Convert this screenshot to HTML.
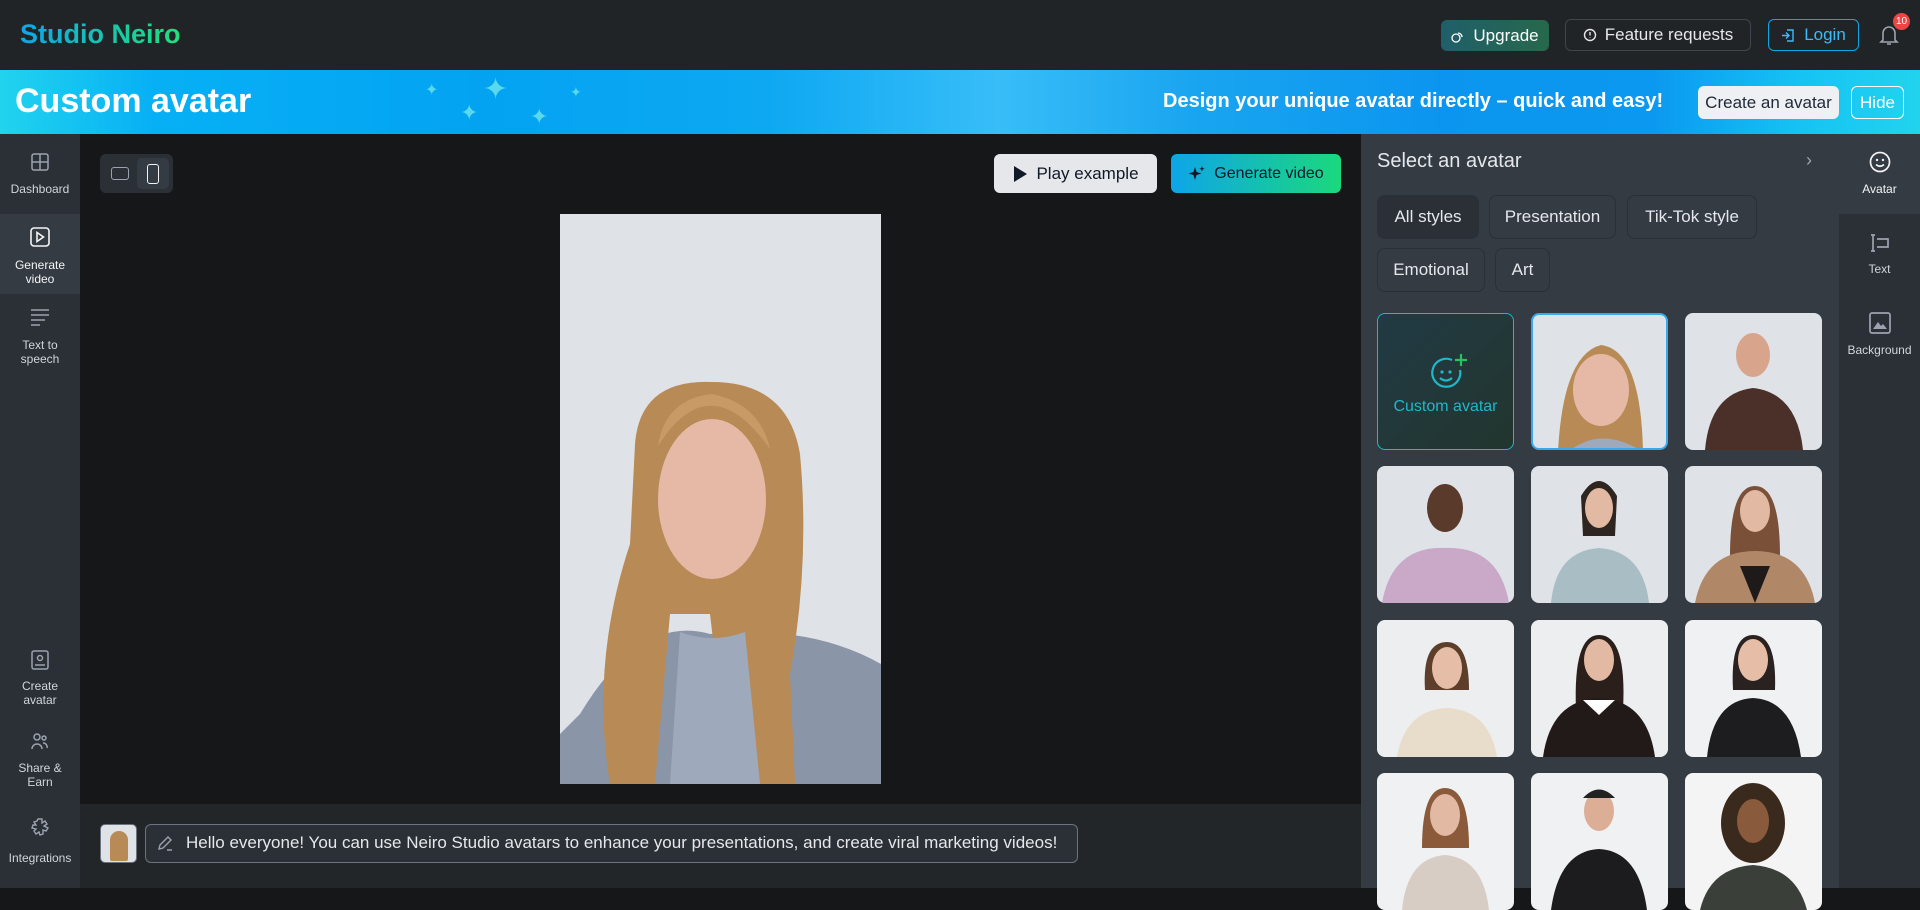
<!DOCTYPE html>
<html><head><meta charset="utf-8"><style>
*{box-sizing:border-box;margin:0;padding:0}
body{width:1920px;height:888px;overflow:hidden;background:#161718;font-family:"Liberation Sans",sans-serif;position:relative;color:#e5e7eb}
.abs{position:absolute}
.hdr{left:0;top:0;width:1920px;height:70px;background:#212427}
.logo{left:20px;top:19px;font-size:27px;font-weight:bold;background:linear-gradient(90deg,#0ea5e9,#22e07a);-webkit-background-clip:text;color:transparent}
.btn{position:absolute;border-radius:6px;font-size:17px;display:flex;align-items:center;justify-content:center;gap:8px}
.banner{left:0;top:70px;width:1920px;height:64px;background:linear-gradient(90deg,#22d3ee 0%,#07b0f5 8%,#03a3f2 25%,#0ea8f2 40%,#38bdf8 52%,#1aa5f0 62%,#0b95f0 75%,#0b98f0 86%,#16c4f4 94%,#22d3ee 100%)}
.side{left:0;top:134px;width:80px;height:754px;background:#2b3036}
.si{position:absolute;left:0;width:80px;text-align:center;font-size:12px;color:#d1d5db;line-height:14px}
.main{left:80px;top:134px;width:1281px;height:670px;background:#161718}
.bot{left:80px;top:804px;width:1281px;height:84px;background:#232629}
.panel{left:1361px;top:134px;width:478px;height:754px;background:#343b43}
.tabs{left:1839px;top:134px;width:81px;height:754px;background:#2b3036}
.chip{position:absolute;height:44px;border:1px solid #2b3036;border-radius:8px;font-size:17px;color:#e5e7eb;display:flex;align-items:center;justify-content:center}
.card{position:absolute;width:137px;height:137px;border-radius:8px;overflow:hidden;background:#dfe2e7}
</style></head><body>
<div class="abs hdr"></div>
<div class="abs logo">Studio Neiro</div>
<div class="btn" style="left:1441px;top:20px;width:108px;height:31px;background:linear-gradient(90deg,#1f5f6a,#27684c);color:#fff"><svg width="14" height="14" viewBox="0 0 14 14"><circle cx="5" cy="9" r="4" fill="none" stroke="#fff" stroke-width="1.3"/><path d="M7 4a4 4 0 0 1 4 4" fill="none" stroke="#fff" stroke-width="1.3"/></svg>Upgrade</div>
<div class="btn" style="left:1565px;top:19px;width:186px;height:32px;border:1px solid #3f454c;color:#e5e7eb"><svg width="14" height="14" viewBox="0 0 14 14"><circle cx="7" cy="7" r="5.5" fill="none" stroke="#e5e7eb" stroke-width="1.4"/><path d="M7 4v3.5M7 9.5v.5" stroke="#e5e7eb" stroke-width="1.4"/></svg>Feature requests</div>
<div class="btn" style="left:1768px;top:19px;width:91px;height:32px;border:1px solid #0ea5e9;color:#38bdf8"><svg width="15" height="15" viewBox="0 0 15 15"><path d="M6 2h6v11H6M1 7.5h7M5 4.5l3 3-3 3" fill="none" stroke="#38bdf8" stroke-width="1.4"/></svg>Login</div>
<svg class="abs" style="left:1878px;top:23px" width="22" height="24" viewBox="0 0 22 24"><path d="M5 17V10a6 6 0 0 1 12 0v7l2 2H3zM9 21h4" fill="none" stroke="#9ca3af" stroke-width="1.6"/></svg>
<div class="abs" style="left:1893px;top:13px;width:17px;height:17px;border-radius:50%;background:#ef4444;color:#fff;font-size:10px;text-align:center;line-height:17px">10</div>

<div class="abs banner"></div>
<div class="abs" style="left:15px;top:82px;font-size:34px;font-weight:bold;color:#fff">Custom avatar</div>
<div class="abs" style="left:420px;top:70px;color:#7ef0ea;font-size:22px;opacity:.7"><span style="position:absolute;left:5px;top:10px;font-size:16px">✦</span><span style="position:absolute;left:63px;top:2px;font-size:30px">✦</span><span style="position:absolute;left:40px;top:30px">✦</span><span style="position:absolute;left:110px;top:34px">✦</span><span style="position:absolute;left:150px;top:14px;font-size:14px">✦</span></div>
<div class="abs" style="left:1163px;top:90px;font-size:20px;font-weight:bold;color:#fff">Design your unique avatar directly – quick and easy!</div>
<div class="btn" style="left:1698px;top:86px;width:141px;height:33px;background:#eef0f3;color:#1f2937">Create an avatar</div>
<div class="btn" style="left:1851px;top:86px;width:53px;height:33px;border:1px solid #fff;color:#fff">Hide</div>

<div class="abs side"></div>
<div class="si" style="top:134px;height:80px;padding-top:18px"><svg width="20" height="20" viewBox="0 0 20 20"><rect x="2" y="2" width="16" height="16" rx="2" fill="none" stroke="#9ca3af" stroke-width="1.5"/><path d="M10 2v16M2 10h16" stroke="#9ca3af" stroke-width="1.5"/></svg><div style="margin-top:7px">Dashboard</div></div>
<div class="si" style="top:214px;height:80px;background:#353b42;padding-top:12px;color:#f3f4f6"><svg width="22" height="22" viewBox="0 0 22 22"><rect x="2" y="2" width="18" height="18" rx="3" fill="none" stroke="#f3f4f6" stroke-width="1.6"/><path d="M8 6.5v9l6.5-4.5z" fill="none" stroke="#f3f4f6" stroke-width="1.6"/></svg><div style="margin-top:7px">Generate<br>video</div></div>
<div class="si" style="top:300px;height:70px;padding-top:6px"><svg width="22" height="22" viewBox="0 0 22 22"><path d="M2 4h18M2 9h18M2 14h14M2 19h9" stroke="#9ca3af" stroke-width="1.6"/></svg><div style="margin-top:7px">Text to<br>speech</div></div>
<div class="si" style="top:649px"><svg width="22" height="22" viewBox="0 0 22 22"><rect x="3" y="2" width="16" height="18" rx="2" fill="none" stroke="#9ca3af" stroke-width="1.5"/><circle cx="11" cy="9" r="2.5" fill="none" stroke="#9ca3af" stroke-width="1.5"/><path d="M6 16h10" stroke="#9ca3af" stroke-width="1.5"/></svg><div style="margin-top:5px">Create<br>avatar</div></div>
<div class="si" style="top:731px"><svg width="22" height="22" viewBox="0 0 22 22"><circle cx="8" cy="6" r="3" fill="none" stroke="#9ca3af" stroke-width="1.5"/><circle cx="15" cy="7" r="2" fill="none" stroke="#9ca3af" stroke-width="1.5"/><path d="M3 18a5 5 0 0 1 10 0M14 12a4 4 0 0 1 4 5" fill="none" stroke="#9ca3af" stroke-width="1.5"/></svg><div style="margin-top:5px">Share &amp;<br>Earn</div></div>
<div class="si" style="top:817px"><svg width="24" height="24" viewBox="0 0 24 24"><path d="M10 2h4v4l3-2 2 3-3 2 4 2-2 3-3-1v4l-3 1-1-3-3 2-2-3 2-2-4-1 1-3h3L6 5l3-1z" fill="none" stroke="#9ca3af" stroke-width="1.4"/></svg><div style="margin-top:7px">Integrations</div></div>

<div class="abs main"></div>
<div class="abs" style="left:100px;top:154px;width:73px;height:39px;background:#2b3036;border-radius:6px"></div>
<div class="abs" style="left:137px;top:158px;width:32px;height:31px;background:#353b42;border-radius:5px"></div>
<div class="abs" style="left:111px;top:167px;width:18px;height:13px;border:1.5px solid #9ca3af;border-radius:3px"></div>
<div class="abs" style="left:147px;top:164px;width:12px;height:20px;border:1.5px solid #f3f4f6;border-radius:3px"></div>
<div class="btn" style="left:994px;top:154px;width:163px;height:39px;background:#e5e7eb;color:#111827"><svg width="16" height="18" viewBox="0 0 16 18"><path d="M2 1l13 8-13 8z" fill="#111827"/></svg>Play example</div>
<div class="btn" style="left:1171px;top:154px;width:170px;height:39px;background:linear-gradient(90deg,#0ea5e9,#1bd87c);color:#0f172a;font-size:16px"><svg width="18" height="18" viewBox="0 0 18 18"><path d="M7 2l1.5 5 5 1.5-5 1.5L7 15l-1.5-5-5-1.5 5-1.5zM14 1l.7 2 2 .7-2 .7L14 6.5l-.7-2-2-.7 2-.7z" fill="#0f172a"/></svg>Generate video</div>

<svg class="abs" style="left:560px;top:214px" width="321" height="570" viewBox="0 0 321 570">
<rect width="321" height="570" fill="#dfe2e7"/>
<path d="M20 500 Q80 400 150 420 Q250 410 321 450 V570 H0 V520z" fill="#8a96a8"/>
<path d="M75 230 Q80 165 152 168 Q228 168 240 240 Q250 350 230 460 L235 570 H170 L150 400 L110 400 L95 570 H50 Q30 450 70 330z" fill="#b88a55"/>
<ellipse cx="152" cy="285" rx="54" ry="80" fill="#e6b9a6"/>
<path d="M98 232 Q150 150 210 235 Q200 190 152 180 Q105 185 98 232z" fill="#c89a66"/>
<path d="M120 418 Q152 430 185 418 L200 570 H110z" fill="#9eaabb"/>
</svg>

<div class="abs bot"></div>
<div class="abs" style="left:100px;top:824px;width:37px;height:39px;border-radius:5px;background:#dfe2e7;border:1px solid #6b7280;overflow:hidden"><div style="margin:6px auto 0;width:18px;height:30px;background:#b88a55;border-radius:9px 9px 2px 2px"></div></div>
<div class="abs" style="left:145px;top:824px;width:933px;height:39px;border:1.5px solid #6b7280;border-radius:6px;background:#2b3036;font-size:17px;color:#e5e7eb;line-height:36px;padding-left:40px">Hello everyone! You can use Neiro Studio avatars to enhance your presentations, and create viral marketing videos!</div>
<svg class="abs" style="left:156px;top:834px" width="18" height="18" viewBox="0 0 18 18"><path d="M3 15l1-4 8-8 3 3-8 8zM11 16h5" fill="none" stroke="#9ca3af" stroke-width="1.4"/></svg>

<div class="abs panel"></div>
<div class="abs" style="left:1377px;top:150px;font-size:20px;color:#e5e7eb">Select an avatar</div>
<div class="abs" style="left:1806px;top:150px;font-size:18px;color:#9ca3af">›</div>
<div class="chip" style="left:1377px;top:195px;width:102px;background:#2b3036">All styles</div>
<div class="chip" style="left:1489px;top:195px;width:127px">Presentation</div>
<div class="chip" style="left:1627px;top:195px;width:130px">Tik-Tok style</div>
<div class="chip" style="left:1377px;top:248px;width:108px">Emotional</div>
<div class="chip" style="left:1495px;top:248px;width:55px">Art</div>

<div class="card" style="left:1377px;top:313px;background:linear-gradient(135deg,#213a44,#22362e);border:1.5px solid #1fb8c8"><svg style="position:absolute;left:50px;top:38px" width="40" height="40" viewBox="0 0 40 40"><path d="M24 8A14 14 0 1 0 32 18" fill="none" stroke="#1fb7c9" stroke-width="2.2"/><circle cx="14" cy="20" r="1.6" fill="#1fb7c9"/><circle cx="22" cy="20" r="1.6" fill="#1fb7c9"/><path d="M12 26q6 5 12 0" fill="none" stroke="#1fb7c9" stroke-width="2.2"/><path d="M33 2v12M27 8h12" stroke="#22c55e" stroke-width="2.2"/></svg><div style="position:absolute;top:84px;width:100%;text-align:center;font-size:16px;color:#1fb7c9">Custom avatar</div></div>

<div class="card" style="left:1531px;top:313px;border:2px solid #38a8ee"><svg width="137" height="137"><path d="M25 137 Q30 40 68 30 Q108 35 110 137z" fill="#b88a55"/><ellipse cx="68" cy="75" rx="28" ry="36" fill="#e6b9a6"/><path d="M35 137 Q68 110 110 137z" fill="#9eaabb"/></svg></div>
<div class="card" style="left:1685px;top:313px"><svg width="137" height="137"><ellipse cx="68" cy="42" rx="17" ry="22" fill="#d8a58c"/><path d="M20 137 Q25 80 68 75 Q112 80 118 137z" fill="#4a3028"/></svg></div>
<div class="card" style="left:1377px;top:466px"><svg width="137" height="137"><ellipse cx="68" cy="42" rx="18" ry="24" fill="#5a3a2a"/><path d="M5 137 Q15 80 68 82 Q122 80 132 137z" fill="#c9a8c8"/></svg></div>
<div class="card" style="left:1531px;top:466px"><svg width="137" height="137"><path d="M50 30 Q68 0 86 30 L84 70 L52 70z" fill="#2e2520"/><ellipse cx="68" cy="42" rx="14" ry="20" fill="#e2b9a3"/><path d="M20 137 Q25 85 68 82 Q112 85 118 137z" fill="#a9bdc4"/></svg></div>
<div class="card" style="left:1685px;top:466px"><svg width="137" height="137"><path d="M45 90 Q45 20 70 20 Q95 20 95 90z" fill="#7a5038"/><ellipse cx="70" cy="45" rx="15" ry="21" fill="#e2b9a3"/><path d="M10 137 Q20 85 70 85 Q120 85 130 137z" fill="#b08868"/><path d="M55 100 L70 137 L85 100z" fill="#1f1a1a"/></svg></div>
<div class="card" style="left:1377px;top:620px;background:#eceef0"><svg width="137" height="137"><path d="M48 70 Q45 22 70 22 Q92 22 92 70z" fill="#5c3e2a"/><ellipse cx="70" cy="48" rx="15" ry="21" fill="#e6bea8"/><path d="M20 137 Q28 90 70 88 Q112 90 120 137z" fill="#e8dccb"/></svg></div>
<div class="card" style="left:1531px;top:620px;background:#eceef0"><svg width="137" height="137"><path d="M45 90 Q42 15 68 15 Q96 15 92 90z" fill="#2a1f1a"/><ellipse cx="68" cy="40" rx="15" ry="21" fill="#e2b9a3"/><path d="M12 137 Q20 80 68 78 Q116 80 124 137z" fill="#211a18"/><path d="M52 80 L68 95 L84 80z" fill="#fff"/></svg></div>
<div class="card" style="left:1685px;top:620px;background:#f0f1f3"><svg width="137" height="137"><path d="M48 70 Q45 15 68 15 Q92 15 90 70z" fill="#2a2220"/><ellipse cx="68" cy="40" rx="15" ry="21" fill="#e6bea8"/><path d="M22 137 Q28 80 68 78 Q108 80 116 137z" fill="#1d1d1f"/></svg></div>
<div class="card" style="left:1377px;top:773px;background:#f0f1f3"><svg width="137" height="137"><path d="M45 75 Q45 15 68 15 Q92 15 92 75z" fill="#8a5a3a"/><ellipse cx="68" cy="42" rx="15" ry="21" fill="#e2b9a3"/><path d="M25 137 Q30 85 68 82 Q106 85 112 137z" fill="#d7cdc5"/></svg></div>
<div class="card" style="left:1531px;top:773px;background:#f0f1f3"><svg width="137" height="137"><ellipse cx="68" cy="38" rx="15" ry="20" fill="#dcae96"/><path d="M52 25 Q68 8 84 25z" fill="#222"/><path d="M20 137 Q28 78 68 76 Q108 78 116 137z" fill="#1c1c1e"/></svg></div>
<div class="card" style="left:1685px;top:773px;background:#f4f4f5"><svg width="137" height="137"><ellipse cx="68" cy="50" rx="32" ry="40" fill="#3a2a1e"/><ellipse cx="68" cy="48" rx="16" ry="22" fill="#8a5a3c"/><path d="M15 137 Q25 95 68 92 Q111 95 122 137z" fill="#3b3f3a"/></svg></div>

<div class="abs tabs"></div>
<div class="abs" style="left:1839px;top:134px;width:81px;height:80px;background:#343b43"></div>
<div class="si" style="left:1839px;top:150px;width:81px;color:#f3f4f6"><svg width="24" height="24" viewBox="0 0 24 24"><circle cx="12" cy="12" r="9.5" fill="none" stroke="#f3f4f6" stroke-width="1.7"/><circle cx="9" cy="10" r="1.2" fill="#f3f4f6"/><circle cx="15" cy="10" r="1.2" fill="#f3f4f6"/><path d="M8 14.5q4 3.5 8 0" fill="none" stroke="#f3f4f6" stroke-width="1.7"/></svg><div style="margin-top:5px">Avatar</div></div>
<div class="si" style="left:1839px;top:232px;width:81px"><svg width="24" height="22" viewBox="0 0 24 22"><path d="M5 3v16M3 3h4M3 19h4M9 7h11v8H9" fill="none" stroke="#9ca3af" stroke-width="1.7"/></svg><div style="margin-top:5px">Text</div></div>
<div class="si" style="left:1839px;top:311px;width:81px"><svg width="24" height="24" viewBox="0 0 24 24"><rect x="2" y="2" width="20" height="20" rx="2" fill="none" stroke="#9ca3af" stroke-width="1.7"/><path d="M5 18l5-7 3 4 2-2 4 5z" fill="#9ca3af"/></svg><div style="margin-top:5px">Background</div></div>
</body></html>
